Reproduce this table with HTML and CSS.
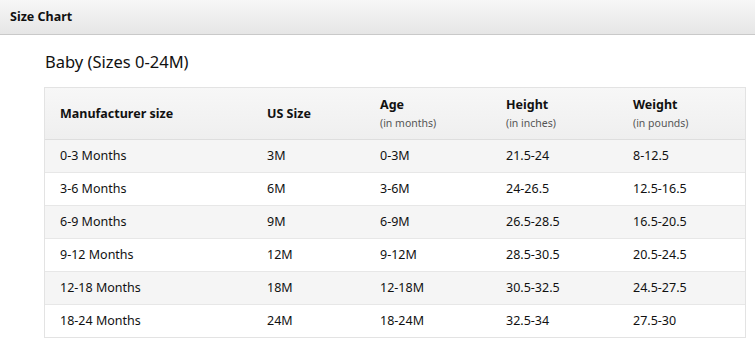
FILE: index.html
```html
<!DOCTYPE html>
<html lang="en">

<head>
    <meta charset="UTF-8">
    <meta name="viewport" content="width=device-width, initial-scale=1.0">
    <title>Size Chart</title>
    <link rel="stylesheet" href="styles.css">
</head>

<body>
    <div class="topBar">Size Chart</div>

    <div class="chartBody">
        <h2 class="chartTitle">Baby (Sizes 0-24M)</h2>

        <div class="tableFrame">
            <table class="sizeTable">
                <colgroup>
                    <col class="colMaker">
                    <col class="colUs">
                    <col class="colAge">
                    <col class="colHeight">
                    <col class="colWeight">
                </colgroup>
                <thead>
                    <tr>
                        <th>Manufacturer size</th>
                        <th>US Size</th>
                        <th>Age<span class="unit">(in months)</span></th>
                        <th>Height<span class="unit">(in inches)</span></th>
                        <th>Weight<span class="unit">(in pounds)</span></th>
                    </tr>
                </thead>
                <tbody>
                    <tr><td>0-3 Months</td><td>3M</td><td>0-3M</td><td>21.5-24</td><td>8-12.5</td></tr>
                    <tr><td>3-6 Months</td><td>6M</td><td>3-6M</td><td>24-26.5</td><td>12.5-16.5</td></tr>
                    <tr><td>6-9 Months</td><td>9M</td><td>6-9M</td><td>26.5-28.5</td><td>16.5-20.5</td></tr>
                    <tr><td>9-12 Months</td><td>12M</td><td>9-12M</td><td>28.5-30.5</td><td>20.5-24.5</td></tr>
                    <tr><td>12-18 Months</td><td>18M</td><td>12-18M</td><td>30.5-32.5</td><td>24.5-27.5</td></tr>
                    <tr><td>18-24 Months</td><td>24M</td><td>18-24M</td><td>32.5-34</td><td>27.5-30</td></tr>
                </tbody>
            </table>
        </div>
    </div>
</body>

</html>
```

FILE: styles.css
```css
body {
  margin: 0;
  background-color: #fff;
  color: #111;
  font-family: "Noto Sans", "Open Sans", sans-serif;
}

.topBar {
  height: 34px;
  padding-left: 10px;
  line-height: 34px;
  font-size: 12.5px;
  font-weight: 700;
  background: linear-gradient(#f7f7f7, #e6e6e6);
  border-bottom: 1px solid #c9c9c9;
}

.chartBody {
  padding: 0 9px 0 44px;
}

.chartTitle {
  margin: 16px 0 15px 1px;
  font-size: 16.5px;
  font-weight: 400;
  line-height: 21px;
}

.tableFrame {
  width: 700px;
  border: 1px solid #e3e3e3;
}

.sizeTable {
  width: 100%;
  table-layout: fixed;
  border-collapse: separate;
  border-spacing: 0;
  font-size: 12.5px;
}

.colMaker { width: 207px; }
.colUs { width: 113px; }
.colAge { width: 126px; }
.colHeight { width: 127px; }
.colWeight { width: 127px; }

.sizeTable th {
  padding: 8px 16px 8px 15px;
  text-align: left;
  font-weight: 700;
  line-height: 17px;
  background: linear-gradient(#f7f7f7, #efefef);
  border-bottom: 1px solid #dedede;
}

.unit {
  display: block;
  margin-top: 2px;
  line-height: 16px;
  font-size: 10.5px;
  font-weight: 400;
  color: #555;
}

.sizeTable td {
  padding: 8px 16px 8px 15px;
  line-height: 16px;
  border-bottom: 1px solid #e7e7e7;
}

.sizeTable tbody tr:nth-child(odd) td {
  background-color: #f5f5f5;
}

.sizeTable tbody tr:last-child td {
  border-bottom: none;
}
```
